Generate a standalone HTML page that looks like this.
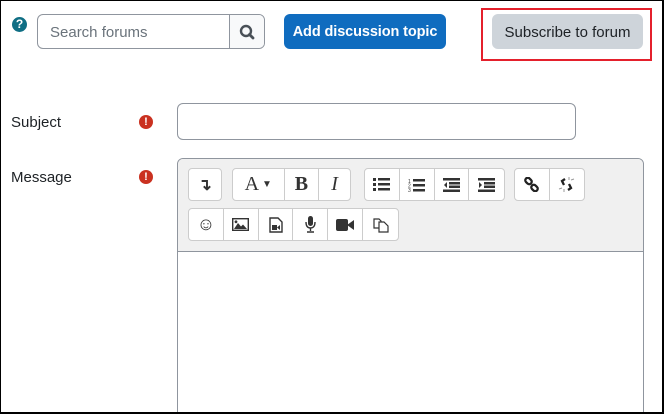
<!DOCTYPE html>
<html><head><style>
*{box-sizing:border-box;margin:0;padding:0}
html,body{width:664px;height:414px;overflow:hidden;background:#fff}
body{position:relative;font-family:"Liberation Sans",sans-serif;color:#1d2125}
.frame{position:absolute;left:0;top:0;width:664px;height:414px;border:1px solid #000;border-right-width:2px;border-bottom-width:2px;z-index:5;pointer-events:none}
.abs{position:absolute}
.help{left:12px;top:17px;width:15px;height:15px;border-radius:50%;background:#0f6e84;color:#fff;font-weight:bold;font-size:12px;line-height:15px;text-align:center}
.search{left:37px;top:14px;width:228px;height:35px;border:1px solid #8f959e;border-radius:6px;overflow:hidden}
.search .t{position:absolute;left:12px;top:9px;font-size:15px;color:#6a737b}
.search .b{position:absolute;right:0;top:0;width:35px;height:33px;background:#f8f9fa;border-left:1px solid #8f959e}
.btn{height:35px;border-radius:6px;font-size:15px;line-height:37px;text-align:center}
.add{left:284px;top:14px;width:162px;background:#0f6cbf;color:#fff;font-weight:bold;font-size:14.5px;letter-spacing:-0.1px}
.sub{left:492px;top:14px;width:151px;background:#ced4da;color:#1d2125}
.red{left:481px;top:8px;width:171px;height:53px;border:2px solid #e4202c}
.lbl{font-size:15px;color:#1d2125}
.req{width:14px;height:14px;border-radius:50%;background:#ca3120;color:#fff;font-size:11px;font-weight:bold;line-height:14px;text-align:center}
.inp{left:177px;top:103px;width:399px;height:37px;border:1px solid #8f959e;border-radius:6px}
.ed{left:177px;top:158px;width:467px;height:270px;border:1px solid #8f959e;border-radius:6px;background:#fff;overflow:hidden}
.tb{position:absolute;left:0;top:0;width:100%;height:93px;background:#f0f0f0;border-bottom:1px solid #8f959e}
.g{position:absolute;height:33px;background:#fff;border:1px solid #ccc;border-radius:4px;display:flex}
.g span{width:35px;height:31px;border-right:1px solid #ccc;display:flex;align-items:center;justify-content:center;font-size:14px;color:#333}
.g span:last-child{border-right:none}
</style></head><body>
<div class="frame"></div>
<div class="abs help">?</div>
<div class="abs search"><div class="t">Search forums</div><div class="b"><svg width="35" height="33" viewBox="0 0 35 33"><circle cx="16" cy="16" r="5" fill="none" stroke="#495057" stroke-width="2.4"/><line x1="19.5" y1="19.5" x2="23" y2="23" stroke="#495057" stroke-width="2.8" stroke-linecap="round"/></svg></div></div>
<div class="abs btn add">Add discussion topic</div>
<div class="abs btn sub">Subscribe to forum</div>
<div class="abs red"></div>
<div class="abs lbl" style="left:11px;top:114px">Subject</div>
<div class="abs req" style="left:139px;top:115px">!</div>
<div class="abs inp"></div>
<div class="abs lbl" style="left:11px;top:169px">Message</div>
<div class="abs req" style="left:139px;top:170px">!</div>
<div class="abs ed"><div class="tb">
<div class="g" style="left:10px;top:9px;width:34px"><span style="font-weight:bold;font-size:16px">↴</span></div>
<div class="g" style="left:54px;top:9px;width:119px"><span style="width:52px;font-family:'Liberation Serif',serif;font-size:20px">A<small style="font-size:10px;margin-left:3px">▼</small></span><span style="font-family:'Liberation Serif',serif;font-weight:bold;font-size:20px">B</span><span style="width:31px;font-family:'Liberation Serif',serif;font-style:italic;font-size:20px">I</span></div>
<div class="g" style="left:186px;top:9px;width:141px">
<span><svg width="17" height="13"><g fill="#333"><rect x="0" y="0" width="3" height="3"/><rect x="0" y="5" width="3" height="3"/><rect x="0" y="10" width="3" height="3"/><rect x="5" y="0" width="12" height="2.5"/><rect x="5" y="5" width="12" height="2.5"/><rect x="5" y="10" width="12" height="2.5"/></g></svg></span>
<span><svg width="17" height="14"><g fill="#333"><text x="0" y="5" font-size="5">1</text><text x="0" y="9.5" font-size="5">2</text><text x="0" y="14" font-size="5">3</text><rect x="5" y="1" width="12" height="2.5"/><rect x="5" y="6" width="12" height="2.5"/><rect x="5" y="11" width="12" height="2.5"/></g></svg></span>
<span><svg width="17" height="14"><g fill="#333"><rect x="0" y="0" width="17" height="2.5"/><rect x="6" y="4" width="11" height="2.5"/><rect x="6" y="7.5" width="11" height="2.5"/><rect x="0" y="11.5" width="17" height="2.5"/><path d="M4 4 L1 7 L4 10z"/></g></svg></span>
<span><svg width="17" height="14"><g fill="#333"><rect x="0" y="0" width="17" height="2.5"/><rect x="6" y="4" width="11" height="2.5"/><rect x="6" y="7.5" width="11" height="2.5"/><rect x="0" y="11.5" width="17" height="2.5"/><path d="M1 4 L4 7 L1 10z"/></g></svg></span></div>
<div class="g" style="left:336px;top:9px;width:71px">
<span><svg width="15" height="15"><g fill="none" stroke="#222" stroke-width="2.3"><rect x="1" y="1.5" width="7" height="5" rx="2.5" transform="rotate(45 4.5 4)"/><rect x="7" y="8.5" width="7" height="5" rx="2.5" transform="rotate(45 10.5 11)"/></g></svg></span>
<span><svg width="17" height="17"><g fill="none" stroke="#222" stroke-width="2.3"><path d="M7 3 L4 5 L6 9"/><path d="M10 14 L13 12 L11 8"/></g><g stroke="#999" stroke-width="1"><line x1="11" y1="1" x2="11" y2="4"/><line x1="13" y1="4" x2="16" y2="3"/><line x1="1" y1="13" x2="4" y2="12"/><line x1="6" y1="13" x2="6" y2="16"/></g></svg></span></div>
<div class="g" style="left:10px;top:49px;width:211px">
<span style="font-size:18px">☺</span>
<span><svg width="17" height="13"><rect x="0.7" y="0.7" width="15.6" height="11.6" fill="#fff" stroke="#333" stroke-width="1.4"/><path d="M2 11 L6 5 L9 8.5 L11 6.5 L15 11z" fill="#333"/><circle cx="4" cy="3.8" r="1.4" fill="#333"/></svg></span>
<span><svg width="14" height="16"><path d="M1 1 H9 L13 5 V15 H1z" fill="#fff" stroke="#333" stroke-width="1.4"/><rect x="3" y="8" width="5" height="5" fill="#333"/><path d="M8 10.5 L11 8 V13z" fill="#333"/></svg></span>
<span><svg width="11" height="17"><rect x="3" y="0" width="5" height="10" rx="2.5" fill="#333"/><path d="M1 6 Q1 12 5.5 12 Q10 12 10 6" fill="none" stroke="#333" stroke-width="1.4"/><line x1="5.5" y1="12" x2="5.5" y2="15" stroke="#333" stroke-width="1.4"/><line x1="2" y1="16" x2="9" y2="16" stroke="#333" stroke-width="1.4"/></svg></span>
<span><svg width="18" height="12"><rect x="0" y="0" width="12" height="12" rx="2" fill="#333"/><path d="M11 6 L18 1 V11z" fill="#333"/></svg></span>
<span><svg width="16" height="16"><path d="M1 2 H6 L8 4 V11 H1z" fill="#fff" stroke="#333" stroke-width="1.2"/><path d="M6 5 H11 L15 9 V15 H6z" fill="#fff" stroke="#333" stroke-width="1.2"/></svg></span></div>
</div></div>
</body></html>
